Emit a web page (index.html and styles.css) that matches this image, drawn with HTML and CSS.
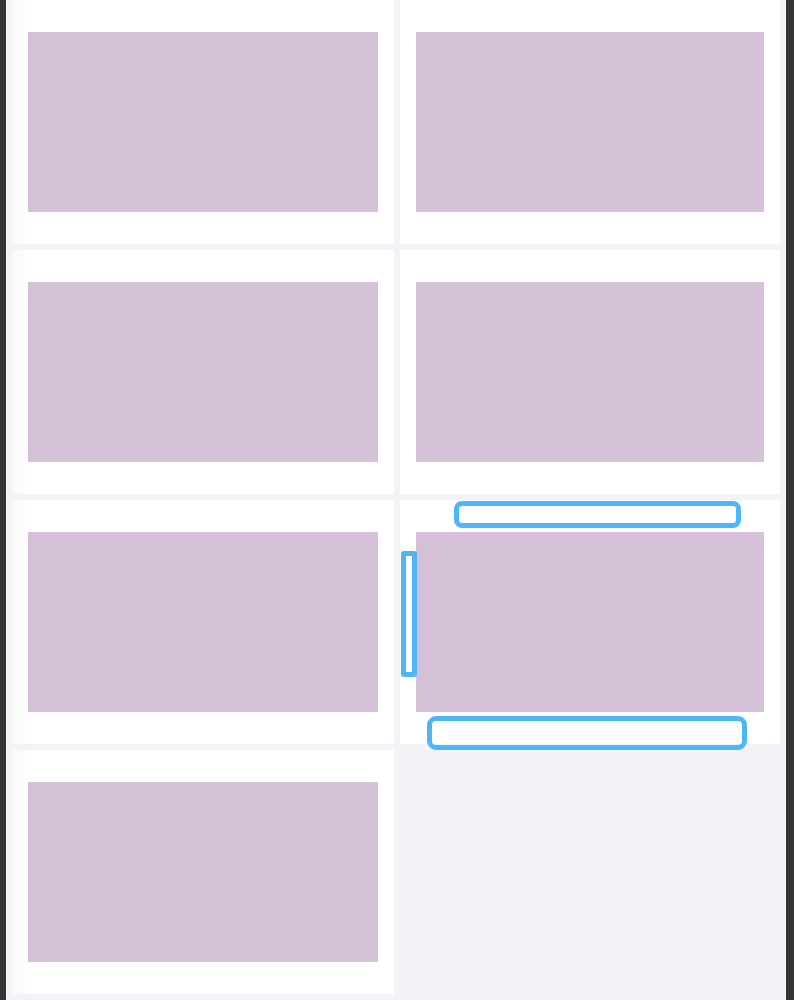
FILE: index.html
```html
<!DOCTYPE html>
<html>
<head>
<meta charset="utf-8">
<link rel="stylesheet" href="styles.css">
</head>
<body>
<div class="page">
  <div class="grid">
    <div class="card left"><div class="thumb"></div></div>
    <div class="card right"><div class="thumb"></div></div>
    <div class="card left"><div class="thumb"></div></div>
    <div class="card right"><div class="thumb"></div></div>
    <div class="card left"><div class="thumb"></div></div>
    <div class="card right"><div class="thumb"></div></div>
    <div class="card left"><div class="thumb"></div></div>
  </div>
  <div class="hl hl-top"></div>
  <div class="hl hl-side"></div>
  <div class="hl hl-bottom"></div>
</div>
</body>
</html>
```
FILE: styles.css
```css
html, body {
  margin: 0;
  padding: 0;
  background: #353535;
  height: 1000px;
  overflow: hidden;
}
.page {
  position: relative;
  margin: 0 8px 0 6px;
  height: 1000px;
  background: #f2f3f7;
  padding: 0 6px;
  box-sizing: border-box;
}
.grid {
  display: grid;
  grid-template-columns: 382px 380px;
  column-gap: 6px;
  row-gap: 6px;
}
.card {
  background: #ffffff;
  padding: 32px 16px;
  height: 244px;
  box-sizing: border-box;
}
.card.left {
  background: linear-gradient(to right, #f9f9f9, #ffffff 22px);
}
.thumb {
  height: 180px;
  background: #d4c1d7;
}
.hl {
  position: absolute;
  border: 5px solid #4db6f8;
  box-sizing: border-box;
}
.hl-top {
  left: 448px;
  top: 501px;
  width: 287px;
  height: 27px;
  border-radius: 8px;
}
.hl-side {
  left: 395px;
  top: 551px;
  width: 16px;
  height: 126px;
  border-radius: 3px;
}
.hl-bottom {
  left: 421px;
  top: 716px;
  width: 320px;
  height: 34px;
  border-radius: 9px;
}
```
